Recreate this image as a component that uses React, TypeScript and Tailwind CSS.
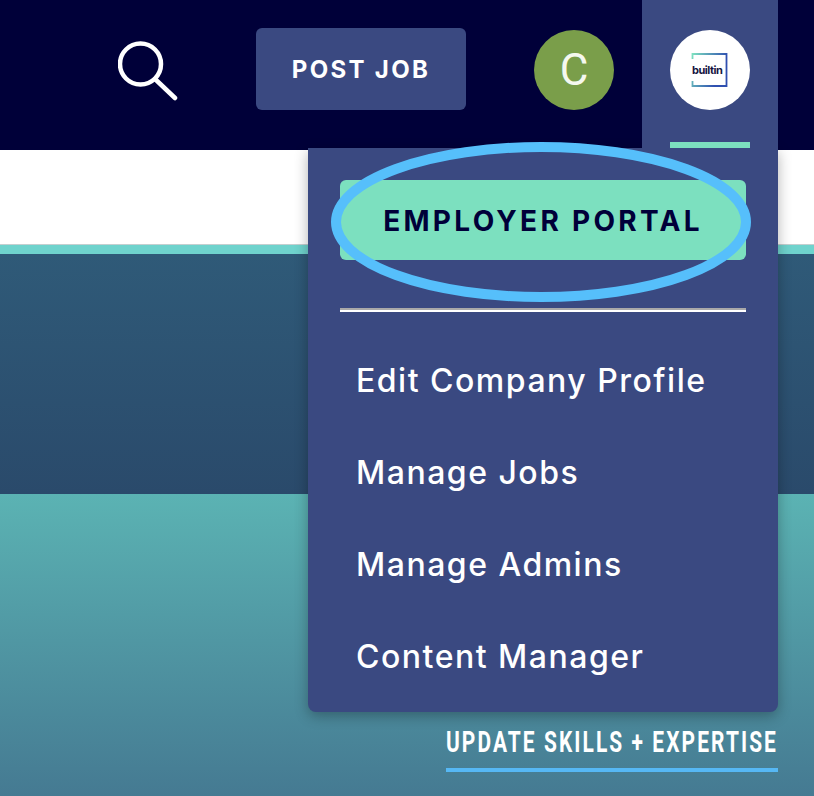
const menuItems = ["Edit Company Profile", "Manage Jobs", "Manage Admins", "Content Manager"];

function BuiltInLogo() {
  return (
    <svg width="42" height="36" viewBox="0 0 42 36">
      <defs>
        <linearGradient id="builtin-edge" x1="0" y1="0" x2="1" y2="0.4">
          <stop offset="0" stopColor="#7de0c0" />
          <stop offset="0.9" stopColor="#2f4fb0" />
        </linearGradient>
      </defs>
      <path d="M3.5 7V2H37.5V34H3.5V29" fill="none" stroke="url(#builtin-edge)" strokeWidth="1.8" />
      <text x="3" y="22" fontFamily="Inter, sans-serif" fontWeight="700" fontSize="11" fill="#14143f" letterSpacing="-0.5">
        builtin
      </text>
    </svg>
  );
}

export default function App() {
  return (
    <div className="relative w-[814px] h-[796px] overflow-hidden font-['Inter',sans-serif]">
      <header className="h-[150px] bg-[#000039] flex items-start pl-[118px] pr-[36px]">
        <div className="mt-[41px] w-[138px]">
          <svg width="60" height="60" viewBox="0 0 60 60" fill="none" stroke="#fff" strokeWidth="4.5" strokeLinecap="round">
            <circle cx="22.5" cy="23" r="20.5" />
            <path d="M37 38L57 57" />
          </svg>
        </div>
        <button className="mt-[28px] w-[210px] h-[82px] pt-[1px] rounded-[6px] bg-[#3a4981] text-white text-[24px] font-bold tracking-[2.3px]">
          POST JOB
        </button>
        <div className="mt-[30px] ml-[68px] w-[80px] h-[80px] rounded-full bg-[#7a9e4a] flex items-center justify-center text-[#f5f8ef] text-[44px] font-['Roboto',sans-serif]">
          C
        </div>
        <div className="relative z-10 ml-[28px] w-[136px] h-[148px] bg-[#3a4981] flex flex-col items-center pt-[30px]">
          <div className="w-[80px] h-[80px] rounded-full bg-white flex items-center justify-center">
            <BuiltInLogo />
          </div>
          <div className="mt-[32px] w-[80px] h-[6px] bg-[#7ce0bf]" />
        </div>
      </header>

      <div className="h-[94px] bg-white" />
      <div className="h-[10px] bg-[#6fd3cd] border-t border-[#c4cfd0]" />
      <div className="h-[240px] bg-gradient-to-b from-[#2f5a78] to-[#2a4a6b]" />
      <div className="h-[302px] bg-gradient-to-b from-[#5bb3b3] to-[#457a92] flex justify-end pr-[36px] pt-[232px]">
        <a className="w-[332px] h-[46px] border-b-4 border-[#56b8f5] text-white text-[30px] leading-[32px] font-bold tracking-[3px] font-['Roboto',sans-serif] whitespace-nowrap">
          <span className="inline-block origin-left scale-x-[0.697]">UPDATE SKILLS + EXPERTISE</span>
        </a>
      </div>

      <div className="absolute left-[308px] top-[148px] w-[470px] h-[564px] rounded-b-[8px] bg-[#3a4981] shadow-[0_4px_14px_rgba(0,0,0,0.3)] px-[32px] pt-[32px]">
        <button className="w-[406px] h-[80px] pt-[2px] rounded-[6px] bg-[#7ce0bf] text-[#000039] text-[28px] font-bold tracking-[3.3px]">
          EMPLOYER PORTAL
        </button>
        <div className="mt-[48px] h-[4px] bg-white border-t-2 border-[#a9a9a9]" />
        <ul className="mt-[23px] pl-[16px]">
          {menuItems.map((item) => (
            <li key={item} className="h-[92px] flex items-center text-white text-[32px] font-medium tracking-[1.5px] whitespace-nowrap">
              {item}
            </li>
          ))}
        </ul>
      </div>

      <svg className="absolute left-[326px] top-[137px] z-20" width="430" height="170" viewBox="0 0 430 170" fill="none">
        <ellipse cx="215" cy="85" rx="205" ry="75" stroke="#56bffb" strokeWidth="10" />
      </svg>
    </div>
  );
}
